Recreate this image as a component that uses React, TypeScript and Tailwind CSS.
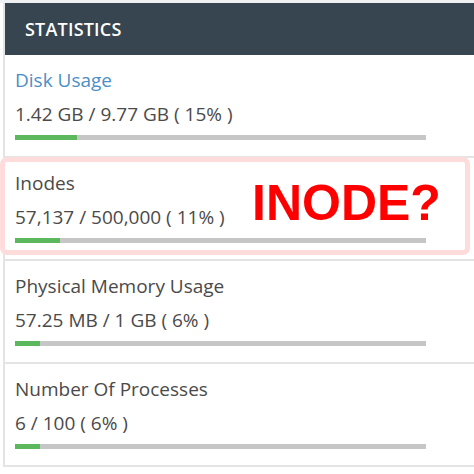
const stats: { title: string; value: string; percent: number; link?: boolean }[] = [
  { title: "Disk Usage", value: "1.42 GB / 9.77 GB ( 15% )", percent: 15, link: true },
  { title: "Inodes", value: "57,137 / 500,000 ( 11% )", percent: 11 },
  { title: "Physical Memory Usage", value: "57.25 MB / 1 GB ( 6% )", percent: 6 },
  { title: "Number Of Processes", value: "6 / 100 ( 6% )", percent: 6 },
];

function StatRow({ title, value, percent, link }: (typeof stats)[number]) {
  return (
    <div className="h-[103px] border-b-2 border-[#e4e4e4] pl-[10px] pt-[12px]">
      <div
        className={`h-[26px] text-[19px] leading-[26px] ${link ? "text-[#4c8fc6]" : "text-[#4a4a4a]"}`}
      >
        {title}
      </div>
      <div className="mt-[8px] h-[26px] text-[19px] leading-[26px] text-[#4a4a4a]">{value}</div>
      <div className="mt-[8px] h-[5px] w-[411px] bg-[#c6c6c6]">
        <div className="h-full bg-[#5cb85c]" style={{ width: `${percent}%` }} />
      </div>
    </div>
  );
}

export default function App() {
  return (
    <div className="relative h-[474px] w-[474px] overflow-hidden bg-white font-['Open_Sans',sans-serif]">
      <div className="h-[3px] bg-[#eef0f2]" />
      <div className="ml-[3px] border-l-2 border-[#e4e4e4]">
        <div className="flex h-[52px] items-center bg-[#36454f] pl-[20px] text-[18px] font-semibold tracking-[0.2px] text-white">
          STATISTICS
        </div>
        {stats.map((s) => (
          <StatRow key={s.title} {...s} />
        ))}
      </div>

      {/* annotation overlay */}
      <div className="pointer-events-none absolute left-0 top-[157px] h-[98px] w-[470px] rounded-[7px] border-[5px] border-[#ffdcdc]" />
      <div className="pointer-events-none absolute left-[252px] top-[175px] font-['Liberation_Sans',Arial,sans-serif] text-[50px] font-bold leading-[56px] text-[#ff0000]">
        INODE?
      </div>
    </div>
  );
}
